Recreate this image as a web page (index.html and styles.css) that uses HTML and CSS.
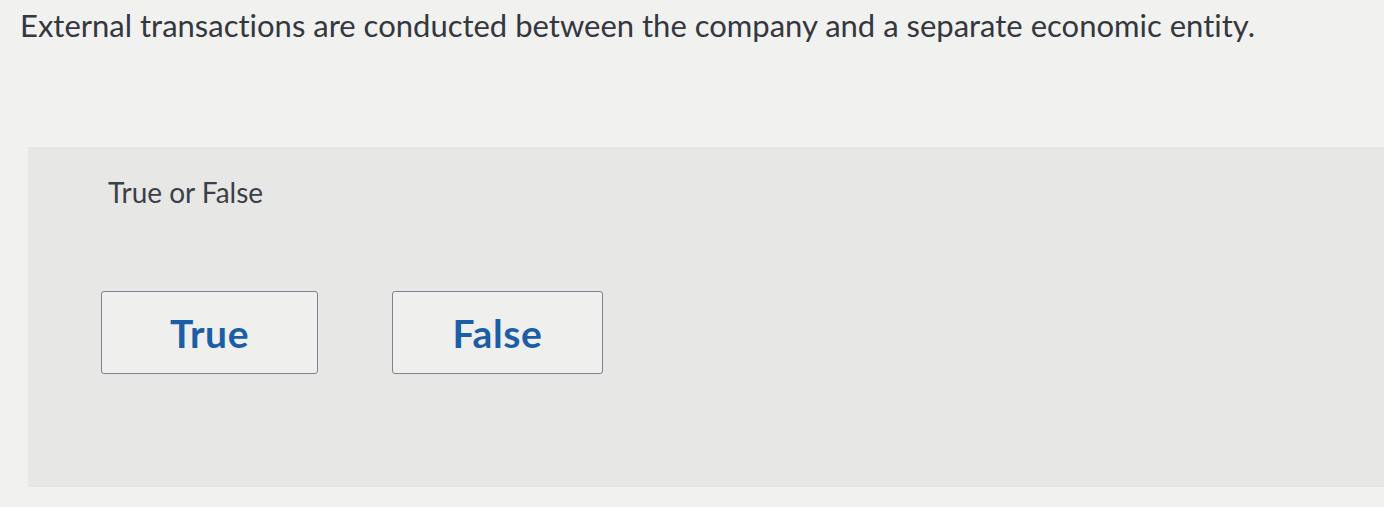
FILE: index.html
```html
<!DOCTYPE html>
<html>
<head>
<meta charset="utf-8">
<link rel="stylesheet" href="styles.css">
</head>
<body>
<div class="page">
  <h1 class="question">External transactions are conducted between the company and a separate economic entity.</h1>
  <div class="panel">
    <div class="prompt">True or False</div>
    <div class="choices">
      <button class="choice choice-true">True</button>
      <button class="choice choice-false">False</button>
    </div>
  </div>
</div>
</body>
</html>
```
FILE: styles.css
```css
html, body {
  margin: 0;
  padding: 0;
  background: #f1f1ef;
}
.page {
  font-family: Lato, "Liberation Sans", sans-serif;
  font-variant-ligatures: none;
  padding: 6px 0 0 20px;
  height: 507px;
  box-sizing: border-box;
  overflow: hidden;
}
.question {
  margin: 0;
  font-weight: 400;
  font-size: 31px;
  line-height: 38px;
  color: #34373e;
}
.panel {
  margin: 103px 0 0 8px;
  background: #e7e7e5;
  height: 340px;
  padding: 27px 0 0 80px;
  box-sizing: border-box;
}
.prompt {
  font-size: 28px;
  line-height: 36px;
  color: #3c3f47;
}
.choices {
  display: flex;
  gap: 74px;
  margin-top: 81px;
  margin-left: -7px;
}
.choice {
  font-family: Lato, "Liberation Sans", sans-serif;
  font-variant-ligatures: none;
  font-weight: 700;
  font-size: 39px;
  letter-spacing: 0.6px;
  color: #1b5ea6;
  background: #efefed;
  border: 1.5px solid #7c8391;
  border-radius: 3px;
  height: 83px;
  padding: 0;
}
.choice-true { width: 217px; }
.choice-false { width: 211px; }
```
